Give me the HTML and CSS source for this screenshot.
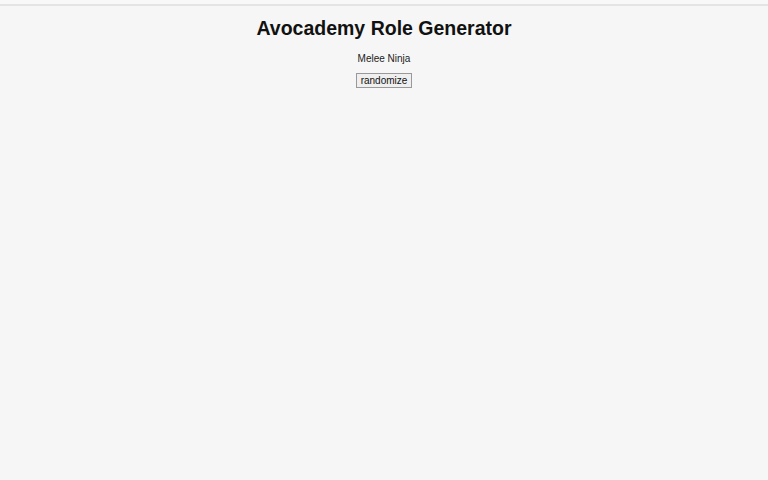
FILE: index.html
```html
<!DOCTYPE html>
<html lang="en">
<head>
  <meta charset="UTF-8">
  <meta name="viewport" content="width=device-width, initial-scale=1.0">
  <title>Avocademy Role Generator</title>
  <link rel="stylesheet" href="styles.css">
</head>
<body>
  <div class="topline"></div>
  <div class="app">
    <h1>Avocademy Role Generator</h1>
    <p class="role">Melee Ninja</p>
    <button class="btn">randomize</button>
  </div>
</body>
</html>
```

FILE: styles.css
```css
*{margin:0;padding:0;box-sizing:border-box;}
body{background:#f6f6f6;font-family:"Liberation Sans",Arial,sans-serif;color:#000;}
.topline{height:6px;border-bottom:2px solid #e4e4e4;background:#f8f8f8;}
.app{display:flex;flex-direction:column;align-items:center;}
h1{font-size:19.5px;font-weight:bold;margin-top:11px;line-height:23px;color:#111;}
.role{font-size:10px;margin-top:13px;line-height:12px;color:#222;}
.btn{font-family:"Liberation Sans",Arial,sans-serif;font-size:10px;margin-top:8px;padding:1px 4px;background:#efefef;border:1px solid #999;color:#111;line-height:11px;}
```
